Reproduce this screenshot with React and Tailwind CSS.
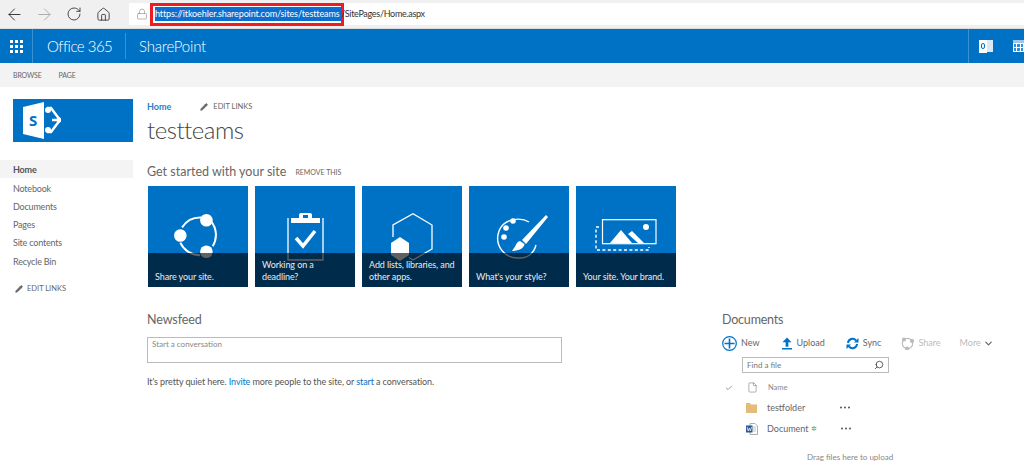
import React from 'react';
import { ArrowLeft, ArrowRight, RotateCw, Home, Lock, Pencil, Search, ChevronDown, Check, File } from 'lucide-react';

const NAV = ['Notebook', 'Documents', 'Pages', 'Site contents', 'Recycle Bin'];

const ShareIcon = () => (
  <svg width="45" height="45" viewBox="0 0 50 50" fill="none">
    <path d="M9 16 A24 24 0 0 1 30 5 M41 9 A24 24 0 0 1 43 37 M29 47 A24 24 0 0 1 7 33" stroke="white" strokeWidth="2.2" />
    <circle cx="36" cy="8" r="7" fill="white" />
    <circle cx="7" cy="25" r="7" fill="white" />
    <circle cx="36" cy="43" r="7" fill="white" />
  </svg>
);

const ClipboardIcon = () => (
  <svg width="37" height="48" viewBox="0 0 37 48" fill="none">
    <path d="M1 5 V47 H36 V5" stroke="white" strokeWidth="1.3" />
    <path d="M4 10 V5 H12 V2 Q12 0 14 0 H23 Q25 0 25 2 V5 H33 V10 Z" fill="white" />
    <rect x="16" y="2" width="5" height="3" fill="#0072c6" />
    <path d="M9 25 L16 33 L28 18" stroke="white" strokeWidth="3.6" />
  </svg>
);

const HexIcon = () => (
  <svg width="42" height="49" viewBox="0 0 42 49" fill="none">
    <path d="M2 24 V12 L22 0.8 L41 12 V36 L22 47 L18 44.5" stroke="white" strokeWidth="1.3" />
    <path d="M9 24 L18 30 V42 L9 48 L0 42 V30 Z" fill="white" />
  </svg>
);

const PaletteIcon = () => (
  <svg width="52" height="44" viewBox="0 0 52 44" fill="none">
    <path d="M33 7 C25 2 8 3 3 16 C-2 30 8 44 24 43 C32 43 38 38 40 30" stroke="white" strokeWidth="1.4" />
    <circle cx="17" cy="6" r="2.8" fill="white" />
    <circle cx="10" cy="13" r="2.8" fill="white" />
    <circle cx="8" cy="22" r="2.8" fill="white" />
    <path d="M26 25 L50 0 L52 2 L30 29 Z" fill="white" />
    <path d="M24 26 C20 27 20 31 18 33 L16 36 C21 36 28 34 28.5 29 Z" fill="white" />
  </svg>
);

const BrandIcon = () => (
  <svg width="62" height="32" viewBox="0 0 62 32" fill="none">
    <rect x="7.5" y="0.7" width="53.5" height="24" stroke="white" strokeWidth="1.2" />
    <path d="M15 24 L26 11 L37 24 Z" fill="white" />
    <path d="M33 15 L37 12 L49 24 H43 Z" fill="white" />
    <circle cx="51" cy="8" r="3" fill="white" />
    <path d="M4 8 H1 V31 H54 V28" stroke="white" strokeWidth="1.4" strokeDasharray="3 2.4" />
  </svg>
);

const TILES = [
  { icon: <ShareIcon />, text: 'Share your site.', pos: 'top-[27px] left-[26px]', wrap: 'max-w-full' },
  { icon: <ClipboardIcon />, text: 'Working on a deadline?', pos: 'top-[27px] left-[32px]', wrap: 'max-w-[60px]' },
  { icon: <HexIcon />, text: 'Add lists, libraries, and other apps.', pos: 'top-[27px] left-[29px]', wrap: 'max-w-full' },
  { icon: <PaletteIcon />, text: "What's your style?", pos: 'top-[29px] left-[27px]', wrap: 'max-w-full' },
  { icon: <BrandIcon />, text: 'Your site. Your brand.', pos: 'top-[33px] left-[19px]', wrap: 'max-w-full' },
];

function Tile({ icon, text, pos, wrap }) {
  return (
    <div className="relative w-[100px] h-[101px] bg-[#0072c6] overflow-hidden">
      <div className={`absolute ${pos}`}>{icon}</div>
      <div className="absolute left-0 right-0 bottom-0 h-[34px] bg-black/[0.62] flex items-end pl-[7px] pr-[4px] pb-[5px]">
        <span className={`${wrap} text-[9px] leading-[11.5px] tracking-[-0.1px] text-[#e6edf2]`}>{text}</span>
      </div>
    </div>
  );
}

const FolderIcon = () => (
  <svg width="11" height="10" viewBox="0 0 11 10">
    <path d="M0 0 H4 L5 1.5 H11 V10 H0 Z" fill="#e3bc7b" />
  </svg>
);

const WordIcon = () => (
  <svg width="12" height="12" viewBox="0 0 12 12">
    <path d="M4 .5 H9 L11.5 3 V11.5 H4 Z" fill="white" stroke="#9a9a9a" strokeWidth=".8" />
    <path d="M7 4 H10 M7 6 H10 M7 8 H10" stroke="#b5b5b5" strokeWidth=".8" />
    <rect x="0" y="2.5" width="6.5" height="7" fill="#2b5797" />
    <path d="M1 4 L2.2 8 L3.3 5 L4.4 8 L5.6 4" stroke="white" strokeWidth=".7" fill="none" />
  </svg>
);

const Dots = () => (
  <svg width="10" height="3" viewBox="0 0 10 3" fill="#555">
    <circle cx="1" cy="1.5" r="1" />
    <circle cx="5" cy="1.5" r="1" />
    <circle cx="9" cy="1.5" r="1" />
  </svg>
);

export default function App() {
  return (
    <div className="w-[1024px] h-[471px] overflow-hidden bg-white font-['Lato',sans-serif] text-[#666]">
      {/* browser toolbar */}
      <div className="h-[29px] bg-[#f0f0f0] flex items-start pt-[3px] border-b border-[#dcdcdc]">
        <div className="w-[129px] h-[22px] flex items-center text-[#333]">
          <ArrowLeft size={19} strokeWidth={1.2} className="ml-[5px]" />
          <ArrowRight size={19} strokeWidth={1.2} className="ml-[11px] text-[#aaa]" />
          <RotateCw size={16} strokeWidth={1.3} className="ml-[12px]" />
          <Home size={15} strokeWidth={1.4} className="ml-[14px]" />
        </div>
        <div className="flex-1 h-[22px] bg-white flex items-center">
          <Lock size={12} strokeWidth={1.2} className="ml-[7px] text-[#888]" />
          <div className="ml-[2px] h-[23px] border-[3px] border-[#ed1c24] flex items-center pl-[2px]">
            <span className="w-[186px] h-[14px] bg-[#0a6fd0] text-white text-[9px] tracking-[-0.12px] leading-[14px] whitespace-nowrap">https://itkoehler.sharepoint.com/sites/testteams</span>
          </div>
          <span className="text-[9px] tracking-[-0.3px] text-[#333] ml-[-3px]">/SitePages/Home.aspx</span>
        </div>
      </div>

      {/* suite bar */}
      <div className="h-[34px] bg-[#0072c6] flex items-center text-white">
        <div className="w-[33px] h-full flex items-center justify-center border-r border-[#3a92d4]">
          <div className="grid grid-cols-3 gap-[2px]">
            {Array.from({ length: 9 }).map((_, i) => <div key={i} className="w-[3px] h-[3px] bg-white" />)}
          </div>
        </div>
        <span className="w-[92px] pl-[14px] text-[15px] font-light whitespace-nowrap tracking-[-0.5px]">Office 365</span>
        <div className="w-px h-[26px] bg-[#3a92d4]" />
        <span className="pl-[13px] text-[15px] font-light tracking-[-0.2px]">SharePoint</span>
        <div className="ml-auto w-px h-full bg-[#3a92d4] mr-[10px]" />
        <div className="w-[14px] h-[12px] bg-[#dbe9f6] mr-[20px] flex items-center">
          <div className="w-[8px] h-[13px] bg-white flex items-center justify-center">
            <div className="w-[4px] h-[6px] rounded-full border border-[#0072c6]" />
          </div>
        </div>
        <div className="w-[11px] h-[12px] bg-white border-t-[3px] border-[#9cc7e8] grid grid-cols-3 gap-px p-px">
          {Array.from({ length: 6 }).map((_, i) => <div key={i} className="bg-[#2f8fd8]" />)}
        </div>
      </div>

      {/* ribbon */}
      <div className="h-[24px] bg-[#f3f3f3] flex items-center pl-[13px] gap-[17px] text-[7px] tracking-[-0.15px] text-[#666]">
        <span>BROWSE</span>
        <span>PAGE</span>
      </div>

      <div className="flex">
        {/* left nav */}
        <div className="w-[147px] shrink-0 pt-[12px]">
          <div className="ml-[13px] w-[120px] h-[43px] bg-[#0072c6] pl-[10px] pt-[3px]">
            <svg width="38" height="37" viewBox="0 0 38 37">
              <path d="M0 5 L21 0 V37 L0 32 Z" fill="white" />
              <text x="6" y="24" fontSize="15" fontWeight="700" fill="#0072c6" fontFamily="Open Sans">S</text>
              <path d="M24 6 L28 6 L37 18 L28 30 L24 30 M29 18 H37" stroke="white" strokeWidth="2.5" fill="none" />
              <circle cx="25" cy="8" r="3" fill="white" />
              <circle cx="25" cy="28" r="3" fill="white" />
              <circle cx="36" cy="18" r="2.5" fill="white" />
            </svg>
          </div>
          <div className="mt-[18px] w-[133px] text-[9px] tracking-[-0.2px]">
            <div className="h-[18px] leading-[19px] bg-[#f4f4f4] pl-[13px] font-bold text-[#555] mb-[1.5px]">Home</div>
            {NAV.map(n => <div key={n} className="h-[18.3px] leading-[18.3px] pl-[13px]">{n}</div>)}
            <div className="mt-[12px] pl-[15px] flex items-center gap-[4px] text-[7.5px] tracking-normal">
              <Pencil size={8} fill="#666" />
              <span>EDIT LINKS</span>
            </div>
          </div>
        </div>

        {/* main */}
        <div className="flex-1">
          <div className="h-[18px] mt-[11px] flex items-center text-[9px]">
            <span className="font-bold text-[#2a7fc9]">Home</span>
            <Pencil size={8} fill="#666" className="ml-[29px]" />
            <span className="ml-[5px] text-[7.5px]">EDIT LINKS</span>
          </div>
          <div className="text-[24px] leading-[28px] font-light text-[#444] tracking-[-0.5px]">testteams</div>
          <div className="mt-[19px] h-[18px] flex items-center">
            <span className="text-[12.5px]">Get started with your site</span>
            <span className="ml-[9px] text-[7px]">REMOVE THIS</span>
          </div>
          <div className="mt-[5px] ml-px flex gap-[7px]">
            {TILES.map(t => <Tile key={t.text} {...t} />)}
          </div>

          <div className="flex mt-[23px]">
            <div className="w-[575px]">
              <div className="text-[12.5px] leading-[20px] text-[#666] tracking-[-0.1px]">Newsfeed</div>
              <div className="mt-[7px] w-[415px] h-[26px] border border-[#bbb] px-[4px] text-[8px] leading-[12px] text-[#888]">Start a conversation</div>
              <div className="mt-[12px] text-[9px] text-[#555] tracking-[-0.1px]">
                It's pretty quiet here. <span className="text-[#0072c6]">Invite</span> more people to the site, or <span className="text-[#0072c6]">start</span> a conversation.
              </div>
            </div>
            <div className="flex-1">
              <div className="text-[12.5px] leading-[20px] tracking-[-0.2px]">Documents</div>
              <div className="mt-[3px] h-[20px] flex items-center text-[9px]">
                <svg width="15" height="15" viewBox="0 0 15 15" fill="none" stroke="#0072c6" strokeWidth="1.2">
                  <circle cx="7.5" cy="7.5" r="6.8" />
                  <path d="M7.5 2.5 V12.5 M2.5 7.5 H12.5" strokeWidth="1.6" />
                </svg>
                <span className="ml-[4px]">New</span>
                <svg className="ml-[22px]" width="10" height="13" viewBox="0 0 11 13" fill="#0072c6">
                  <path d="M5.5 0 L10.5 5 H7 V10 H4 V5 H.5 Z M0 11.5 H11 V13 H0 Z" />
                </svg>
                <span className="ml-[5px]">Upload</span>
                <svg className="ml-[21px]" width="13" height="13" viewBox="0 0 13 13" fill="none" stroke="#0072c6" strokeWidth="2">
                  <path d="M2 6 A4.5 4.5 0 0 1 10 3.5 M11 7 A4.5 4.5 0 0 1 3 9.5" />
                  <path d="M8 5.5 H12.5 V1 Z M5 7.5 H.5 V12 Z" fill="#0072c6" stroke="none" />
                </svg>
                <span className="ml-[4px]">Sync</span>
                <svg className="ml-[20px]" width="13" height="13" viewBox="0 0 13 13" fill="none" stroke="#bbb" strokeWidth="1.2">
                  <circle cx="6.5" cy="6.5" r="5.2" />
                  <circle cx="3" cy="2.5" r="1.5" fill="#bbb" />
                  <circle cx="11" cy="4" r="1.5" fill="#bbb" />
                  <circle cx="6" cy="11.5" r="1.5" fill="#bbb" />
                </svg>
                <span className="ml-[4px] text-[#bbb]">Share</span>
                <span className="ml-[19px] text-[#bbb]">More</span>
                <ChevronDown size={11} strokeWidth={2.6} className="ml-[2px]" />
              </div>
              <div className="mt-[4px] ml-[20px] w-[147px] h-[16px] border border-[#bbb] flex items-center justify-between px-[4px] text-[8px] text-[#777]">
                <span>Find a file</span>
                <Search size={10} className="-scale-x-100 text-[#444]" />
              </div>
              <div className="mt-[5px] h-[19px] flex items-center text-[7.5px] text-[#888]">
                <Check size={8} className="ml-[3px] text-[#666]" />
                <File size={11} strokeWidth={1} className="ml-[14px] text-[#555]" />
                <span className="ml-[10px]">Name</span>
              </div>
              <div className="h-[21px] flex items-center text-[9px]">
                <div className="ml-[24px] w-[12px]"><FolderIcon /></div>
                <span className="ml-[9px] w-[73px]">testfolder</span>
                <Dots />
              </div>
              <div className="h-[21px] flex items-center text-[9px]">
                <div className="ml-[24px] w-[12px]"><WordIcon /></div>
                <span className="ml-[9px]">Document</span>
                <span className="ml-[2px] w-[30px] text-[7px] text-[#5a9e32]">✲</span>
                <Dots />
              </div>
              <div className="mt-[12px] ml-[85px] text-[8px] text-[#888] whitespace-nowrap">Drag files here to upload</div>
            </div>
          </div>
        </div>
      </div>
    </div>
  );
}
